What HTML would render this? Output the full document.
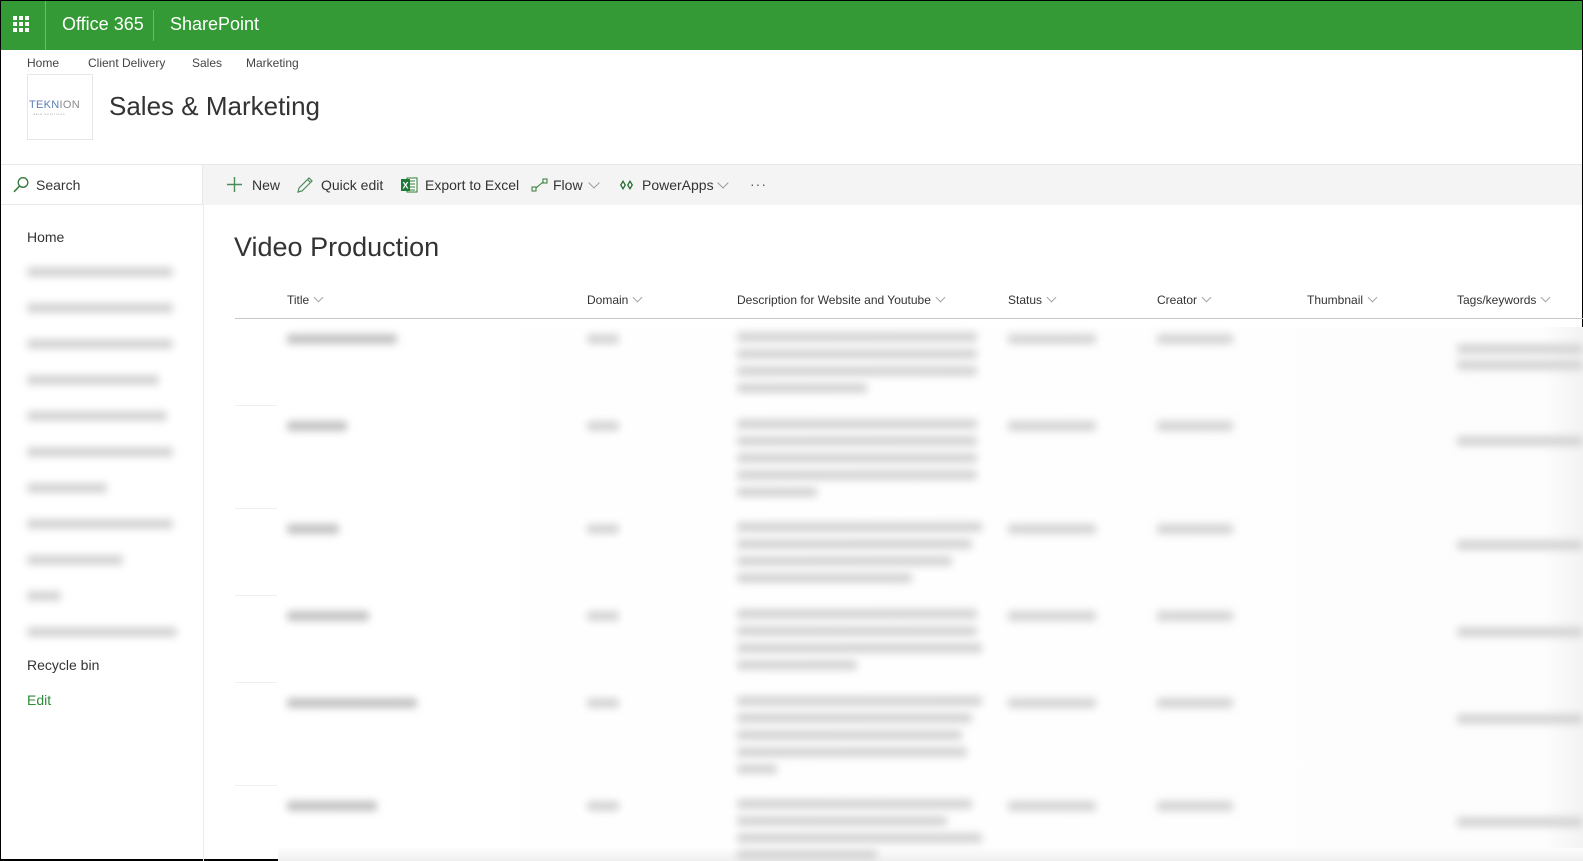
<!DOCTYPE html>
<html><head><meta charset="utf-8">
<style>
*{margin:0;padding:0;box-sizing:border-box}
body{width:1583px;height:861px;overflow:hidden;background:#fff;font-family:"Liberation Sans",sans-serif;color:#333;position:relative}
.a{position:absolute;white-space:nowrap}
.hdr{left:0;top:0;width:1583px;height:50px;background:#349a35;border-top:1px solid #000;border-left:1px solid #000;border-right:1px solid #000}
.w{width:4px;height:4px;background:#fff;position:absolute}
.b{position:absolute;background:#d4d4d4;filter:blur(4px);height:10px;border-radius:3px}
.t{background:#c2c2c2}
.cmd{font-size:14px;color:#333;top:177px}
.col{font-size:12px;color:#333;top:293px}
.chev{display:inline-block;width:7px;height:7px;border-right:1px solid #a6a6a6;border-bottom:1px solid #a6a6a6;transform:rotate(45deg);margin-left:6px;position:relative;top:-3px}
.ch2{position:absolute;width:8px;height:8px;border-right:1px solid #999;border-bottom:1px solid #999;transform:rotate(45deg)}
.nav{font-size:14px;left:27px}
</style></head><body>
<div class="a hdr">
 <div class="w" style="left:12px;top:15px"></div><div class="w" style="left:18px;top:15px"></div><div class="w" style="left:24px;top:15px"></div>
 <div class="w" style="left:12px;top:21px"></div><div class="w" style="left:18px;top:21px"></div><div class="w" style="left:24px;top:21px"></div>
 <div class="w" style="left:12px;top:27px"></div><div class="w" style="left:18px;top:27px"></div><div class="w" style="left:24px;top:27px"></div>
 <div class="a" style="left:44px;top:0;width:1px;height:49px;background:#6cba6c"></div>
 <div class="a" style="left:61px;top:13px;font-size:18px;color:#fff">Office 365</div>
 <div class="a" style="left:152px;top:9px;width:1px;height:31px;background:#6cba6c"></div>
 <div class="a" style="left:169px;top:13px;font-size:18px;color:#fff">SharePoint</div>
</div>
<div class="a" style="left:0;top:50px;width:1px;height:811px;background:#000"></div>
<div class="a" style="left:1582px;top:50px;width:1px;height:277px;background:#000"></div>
<div class="a" style="left:0;top:859px;width:278px;height:2px;background:#000"></div>

<div class="a" style="left:27px;top:56px;font-size:12px;color:#444">Home</div>
<div class="a" style="left:88px;top:56px;font-size:12px;color:#444">Client Delivery</div>
<div class="a" style="left:192px;top:56px;font-size:12px;color:#444">Sales</div>
<div class="a" style="left:246px;top:56px;font-size:12px;color:#444">Marketing</div>
<div class="a" style="left:27px;top:74px;width:66px;height:66px;border:1px solid #e6e6e6;background:#fff">
 <div class="a" style="left:1px;top:24px;font-size:11px;letter-spacing:0.3px;color:#5a7db8">TEKN<span style="color:#888">ION</span></div>
 <div class="a" style="left:5px;top:37px;font-size:3px;color:#999;letter-spacing:1px">data solutions</div>
</div>
<div class="a" style="left:109px;top:91px;font-size:26px;color:#333">Sales &amp; Marketing</div>

<div class="a" style="left:1px;top:164px;width:1581px;height:41px;background:#f4f4f4;border-top:1px solid #e8e8e8"></div>
<div class="a" style="left:1px;top:164px;width:202px;height:41px;background:#fff;border-top:1px solid #e8e8e8;border-bottom:1px solid #e8e8e8;border-right:1px solid #e8e8e8"></div>
<div class="a" style="left:203px;top:205px;width:1px;height:656px;background:#ececec"></div>
<svg class="a" style="left:12px;top:176px" width="18" height="18" viewBox="0 0 18 18"><circle cx="11" cy="6.5" r="4.8" fill="none" stroke="#2f7a39" stroke-width="1.3"/><path d="M7.6 10L2 15.8" stroke="#2f7a39" stroke-width="1.5"/></svg>
<div class="a" style="left:36px;top:177px;font-size:14px;color:#333">Search</div>

<svg class="a" style="left:226px;top:176px" width="17" height="17"><path d="M8.5 1v15M1 8.5h15" stroke="#4a8a5a" stroke-width="1.4"/></svg>
<div class="a cmd" style="left:252px">New</div>
<svg class="a" style="left:296px;top:176px" width="18" height="18" viewBox="0 0 18 18"><path d="M2 16l1-4L13 2l3 3L6 15z M11.5 3.5l3 3" fill="none" stroke="#4a8a5a" stroke-width="1.2"/></svg>
<div class="a cmd" style="left:321px">Quick edit</div>
<svg class="a" style="left:401px;top:177px" width="17" height="16"><rect x="6" y="1" width="10" height="14" fill="#fff" stroke="#2e7d32"/><path d="M9 4h5M9 7h5M9 10h5M9 13h5" stroke="#2e7d32"/><rect x="0" y="2" width="9" height="12" fill="#1e7a36"/><text x="1.5" y="11.5" font-size="9" font-family="Liberation Sans" font-weight="bold" fill="#fff">X</text></svg>
<div class="a cmd" style="left:425px">Export to Excel</div>
<svg class="a" style="left:531px;top:177px" width="18" height="16"><rect x="1" y="10" width="4" height="4" fill="none" stroke="#2e7d32"/><rect x="12" y="2" width="4" height="4" fill="none" stroke="#2e7d32"/><path d="M5 11L12 5" stroke="#2e7d32"/></svg>
<div class="a cmd" style="left:553px">Flow</div>
<div class="ch2" style="left:590px;top:179px"></div>
<svg class="a" style="left:619px;top:179px" width="16" height="12"><path d="M4 1l3 5-3 5-3-5zM11 1l3 5-3 5-3-5z" fill="#1f6b2e"/><path d="M4 3.5l1.5 2.5L4 8.5 2.5 6zM11 3.5l1.5 2.5L11 8.5 9.5 6z" fill="#fff"/></svg>
<div class="a cmd" style="left:642px">PowerApps</div>
<div class="ch2" style="left:719px;top:179px"></div>
<div class="a" style="left:750px;top:176px;font-size:14px;color:#555;letter-spacing:1px">···</div>

<div class="a nav" style="top:229px;color:#333">Home</div>
<div class="b" style="left:27px;top:267px;width:146px"></div>
<div class="b" style="left:27px;top:303px;width:146px"></div>
<div class="b" style="left:27px;top:339px;width:146px"></div>
<div class="b" style="left:27px;top:375px;width:132px"></div>
<div class="b" style="left:27px;top:411px;width:140px"></div>
<div class="b" style="left:27px;top:447px;width:146px"></div>
<div class="b" style="left:27px;top:483px;width:80px"></div>
<div class="b" style="left:27px;top:519px;width:146px"></div>
<div class="b" style="left:27px;top:555px;width:96px"></div>
<div class="b" style="left:27px;top:591px;width:34px"></div>
<div class="b" style="left:27px;top:627px;width:150px"></div>
<div class="a nav" style="top:657px;color:#333">Recycle bin</div>
<div class="a nav" style="top:692px;color:#2e8b3a">Edit</div>

<div class="a" style="left:234px;top:232px;font-size:27px;color:#333">Video Production</div>
<div class="a col" style="left:287px">Title<span class="chev"></span></div>
<div class="a col" style="left:587px">Domain<span class="chev"></span></div>
<div class="a col" style="left:737px">Description for Website and Youtube<span class="chev"></span></div>
<div class="a col" style="left:1008px">Status<span class="chev"></span></div>
<div class="a col" style="left:1157px">Creator<span class="chev"></span></div>
<div class="a col" style="left:1307px">Thumbnail<span class="chev"></span></div>
<div class="a col" style="left:1457px">Tags/keywords<span class="chev"></span></div>
<div class="a" style="left:235px;top:318px;width:1348px;height:1px;background:#c8c8c8"></div>

<div class="a" style="left:278px;top:327px;width:1305px;height:534px;background:linear-gradient(to right,#fff 0,#fdfdfd 97%,#f3f3f3 100%)"></div>
<div class="a" style="left:278px;top:848px;width:1305px;height:13px;background:linear-gradient(#fdfdfd,#f0f0f0)"></div>
<div class="a" style="left:235px;top:405px;width:42px;height:1px;background:#eee"></div>
<div class="a" style="left:235px;top:508px;width:42px;height:1px;background:#eee"></div>
<div class="a" style="left:235px;top:595px;width:42px;height:1px;background:#eee"></div>
<div class="a" style="left:235px;top:682px;width:42px;height:1px;background:#eee"></div>
<div class="a" style="left:235px;top:785px;width:42px;height:1px;background:#eee"></div>

<!-- row 1 -->
<div class="b t" style="left:287px;top:334px;width:110px"></div>
<div class="b" style="left:587px;top:334px;width:32px"></div>
<div class="b" style="left:737px;top:332px;width:240px"></div><div class="b" style="left:737px;top:349px;width:240px"></div><div class="b" style="left:737px;top:366px;width:240px"></div><div class="b" style="left:737px;top:383px;width:130px"></div>
<div class="b" style="left:1008px;top:334px;width:88px"></div>
<div class="b" style="left:1157px;top:334px;width:76px"></div>
<div class="b" style="left:1457px;top:344px;width:126px"></div><div class="b" style="left:1457px;top:360px;width:126px"></div>
<!-- row 2 -->
<div class="b t" style="left:287px;top:421px;width:60px"></div>
<div class="b" style="left:587px;top:421px;width:32px"></div>
<div class="b" style="left:737px;top:419px;width:240px"></div><div class="b" style="left:737px;top:436px;width:240px"></div><div class="b" style="left:737px;top:453px;width:240px"></div><div class="b" style="left:737px;top:470px;width:240px"></div><div class="b" style="left:737px;top:487px;width:80px"></div>
<div class="b" style="left:1008px;top:421px;width:88px"></div>
<div class="b" style="left:1157px;top:421px;width:76px"></div>
<div class="b" style="left:1457px;top:436px;width:126px"></div>
<!-- row 3 -->
<div class="b t" style="left:287px;top:524px;width:52px"></div>
<div class="b" style="left:587px;top:524px;width:32px"></div>
<div class="b" style="left:737px;top:522px;width:245px"></div><div class="b" style="left:737px;top:539px;width:235px"></div><div class="b" style="left:737px;top:556px;width:215px"></div><div class="b" style="left:737px;top:573px;width:175px"></div>
<div class="b" style="left:1008px;top:524px;width:88px"></div>
<div class="b" style="left:1157px;top:524px;width:76px"></div>
<div class="b" style="left:1457px;top:540px;width:126px"></div>
<!-- row 4 -->
<div class="b t" style="left:287px;top:611px;width:82px"></div>
<div class="b" style="left:587px;top:611px;width:32px"></div>
<div class="b" style="left:737px;top:609px;width:240px"></div><div class="b" style="left:737px;top:626px;width:240px"></div><div class="b" style="left:737px;top:643px;width:245px"></div><div class="b" style="left:737px;top:660px;width:120px"></div>
<div class="b" style="left:1008px;top:611px;width:88px"></div>
<div class="b" style="left:1157px;top:611px;width:76px"></div>
<div class="b" style="left:1457px;top:627px;width:126px"></div>
<!-- row 5 -->
<div class="b t" style="left:287px;top:698px;width:130px"></div>
<div class="b" style="left:587px;top:698px;width:32px"></div>
<div class="b" style="left:737px;top:696px;width:245px"></div><div class="b" style="left:737px;top:713px;width:235px"></div><div class="b" style="left:737px;top:730px;width:225px"></div><div class="b" style="left:737px;top:747px;width:230px"></div><div class="b" style="left:737px;top:764px;width:40px"></div>
<div class="b" style="left:1008px;top:698px;width:88px"></div>
<div class="b" style="left:1157px;top:698px;width:76px"></div>
<div class="b" style="left:1457px;top:714px;width:126px"></div>
<!-- row 6 -->
<div class="b t" style="left:287px;top:801px;width:90px"></div>
<div class="b" style="left:587px;top:801px;width:32px"></div>
<div class="b" style="left:737px;top:799px;width:235px"></div><div class="b" style="left:737px;top:816px;width:210px"></div><div class="b" style="left:737px;top:833px;width:245px"></div><div class="b" style="left:737px;top:850px;width:140px"></div>
<div class="b" style="left:1008px;top:801px;width:88px"></div>
<div class="b" style="left:1157px;top:801px;width:76px"></div>
<div class="b" style="left:1457px;top:817px;width:126px"></div>
</body></html>
